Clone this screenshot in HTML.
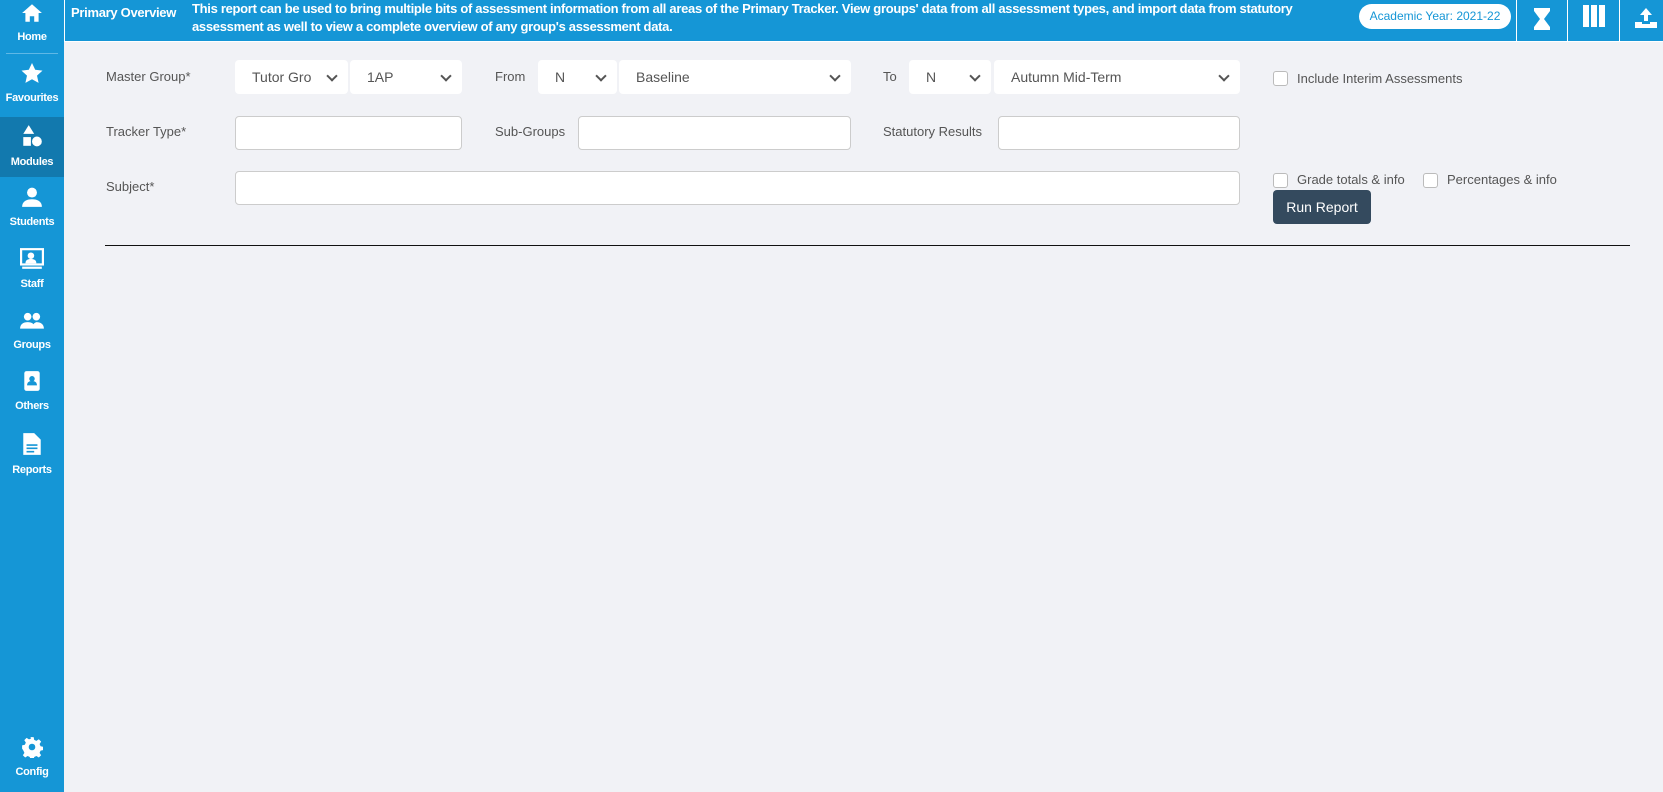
<!DOCTYPE html>
<html><head><style>
*{box-sizing:border-box;margin:0;padding:0}
body{width:1663px;height:792px;background:#f1f2f6;font-family:"Liberation Sans",sans-serif;position:relative;overflow:hidden;color:#555}
.sb{position:absolute;left:0;top:0;width:64px;height:792px;background:#1596d6}
.it{position:absolute;left:0;width:64px;text-align:center;color:#fff;font-size:11px;font-weight:bold;letter-spacing:-0.3px}
.it svg{display:block;margin:0 auto 8px}
.hd{position:absolute;left:64px;top:0;width:1599px;height:42px;background:#1596d6;border-left:1px solid #fff;border-bottom:1px solid #fff}
.ab{position:absolute}
.lbl{position:absolute;font-size:13px;color:#555}
.sel,.inp{position:absolute;background:#fff;border-radius:4px;height:34px}
.inp{border:1px solid #ccc}
.sel{font-size:14px;color:#555;padding:9px 0 0 17px}
.sel:after{content:"";position:absolute;right:12px;top:12px;width:6px;height:6px;border-right:2px solid #555;border-bottom:2px solid #555;transform:rotate(45deg)}
.cb{position:absolute;width:15px;height:15px;border:1px solid #bbb;border-radius:3px;background:#fff}
.sep{position:absolute;top:0;width:1px;height:42px;background:#fff}
</style></head><body>
<div class="sb">
 <div class="it" style="top:3px"><svg width="22" height="20" viewBox="0 0 20 18"><path d="M10 1L1 9h3v8h4v-5h4v5h4V9h3z" fill="#fff"/></svg>Home</div>
 <div style="position:absolute;left:6px;top:53px;width:52px;height:1px;background:#5fb8e6"></div>
 <div class="it" style="top:62px"><svg width="24" height="22" viewBox="0 0 24 22"><path d="M12 1l3.2 6.8 7.3.8-5.5 5 1.6 7.3L12 17.2 5.4 20.9 7 13.6l-5.5-5 7.3-.8z" fill="#fff"/></svg>Favourites</div>
 <div style="position:absolute;top:117px;left:0;width:64px;height:60px;background:#1279ae"></div>
 <div class="it" style="top:124px"><svg width="22" height="24" viewBox="0 0 20 22"><path d="M7 1l5 8H2z" fill="#fff"/><rect x="2" y="12" width="7" height="8" fill="#fff"/><circle cx="14.5" cy="16" r="4.5" fill="#fff"/></svg>Modules</div>
 <div class="it" style="top:186px"><svg width="22" height="22" viewBox="0 0 20 20"><circle cx="10" cy="6" r="4.5" fill="#fff"/><path d="M1 19c0-5 4-7 9-7s9 2 9 7z" fill="#fff"/></svg>Students</div>
 <div class="it" style="top:248px"><svg width="24" height="22" viewBox="0 0 22 20"><rect x="1" y="1" width="20" height="14" fill="none" stroke="#fff" stroke-width="2"/><circle cx="10" cy="7" r="3" fill="#fff"/><path d="M5 14c0-3 2-4 5-4s5 1 5 4z" fill="#fff"/><rect x="2" y="17" width="18" height="2" fill="#fff"/></svg>Staff</div>
 <div class="it" style="top:311px"><svg width="26" height="20" viewBox="0 0 24 18"><circle cx="8" cy="5" r="3.5" fill="#fff"/><circle cx="16" cy="5" r="3.5" fill="#fff"/><path d="M1 16c0-4 3-6 7-6s7 2 7 6zM13 16c0-3 0-5 3-6 4 0 7 2 7 6z" fill="#fff"/></svg>Groups</div>
 <div class="it" style="top:370px"><svg width="20" height="22" viewBox="0 0 18 20"><rect x="2" y="1" width="14" height="18" rx="2" fill="#fff"/><circle cx="9" cy="8" r="2.5" fill="#1596d6"/><path d="M4.5 14c0-3 2-4 4.5-4s4.5 1 4.5 4z" fill="#1596d6"/></svg>Others</div>
 <div class="it" style="top:432px"><svg width="20" height="24" viewBox="0 0 18 22"><path d="M1 1h10l6 6v14H1z" fill="#fff"/><path d="M4 12h10M4 15h10M4 18h7" stroke="#1596d6" stroke-width="1.5"/></svg>Reports</div>
 <div class="it" style="top:736px"><svg width="22" height="22" viewBox="0 0 20 20"><path d="M8.5 1h3l.5 2.5 2 .9 2.2-1.4 2.1 2.1-1.4 2.2.9 2 2.5.5v3l-2.5.5-.9 2 1.4 2.2-2.1 2.1-2.2-1.4-2 .9-.5 2.5h-3l-.5-2.5-2-.9-2.2 1.4-2.1-2.1 1.4-2.2-.9-2L1 11.5v-3l2.5-.5.9-2L3 3.8 5.1 1.7l2.2 1.4 2-.9z" fill="#fff"/><circle cx="10" cy="10" r="3" fill="#1596d6"/></svg>Config</div>
</div>
<div class="hd">
 <div class="ab" style="left:6px;top:5px;color:#fff;font-weight:bold;font-size:13px;letter-spacing:-0.3px">Primary Overview</div>
 <div class="ab" style="left:127px;top:0px;width:1170px;color:#fff;font-weight:bold;font-size:13px;line-height:18px;letter-spacing:-0.3px">This report can be used to bring multiple bits of assessment information from all areas of the Primary Tracker. View groups' data from all assessment types, and import data from statutory assessment as well to view a complete overview of any group's assessment data.</div>
 <div class="ab" style="left:1294px;top:4px;width:152px;height:25px;background:#fff;border-radius:13px;color:#1596d6;font-size:12px;text-align:center;line-height:25px">Academic Year: 2021-22</div>
 <div class="sep" style="left:1451px"></div><div class="sep" style="left:1502px"></div><div class="sep" style="left:1554px"></div>
 <svg class="ab" style="left:1467px;top:7px" width="20" height="24" viewBox="0 0 20 24"><path d="M2 1h16v3l-6 8 6 8v3H2v-3l6-8-6-8z" fill="#fff"/></svg>
 <svg class="ab" style="left:1518px;top:5px" width="22" height="22" viewBox="0 0 22 22"><rect x="0" y="0" width="6" height="22" fill="#fff"/><rect x="8" y="0" width="6" height="22" fill="#fff"/><rect x="16" y="0" width="6" height="22" fill="#fff"/></svg>
 <svg class="ab" style="left:1570px;top:8px" width="22" height="20" viewBox="0 0 22 20"><path d="M11 0l6 7h-4v6H9V7H5z" fill="#fff"/><path d="M0 14h7v2h8v-2h7v6H0z" fill="#fff"/></svg>
</div>
<div class="lbl" style="left:106px;top:69px">Master Group*</div>
<div class="sel" style="left:235px;top:60px;width:113px">Tutor Gro</div>
<div class="sel" style="left:350px;top:60px;width:112px">1AP</div>
<div class="lbl" style="left:495px;top:69px">From</div>
<div class="sel" style="left:538px;top:60px;width:79px">N</div>
<div class="sel" style="left:619px;top:60px;width:232px">Baseline</div>
<div class="lbl" style="left:883px;top:69px">To</div>
<div class="sel" style="left:909px;top:60px;width:82px">N</div>
<div class="sel" style="left:994px;top:60px;width:246px">Autumn Mid-Term</div>
<div class="cb" style="left:1273px;top:71px"></div>
<div class="lbl" style="left:1297px;top:71px">Include Interim Assessments</div>
<div class="lbl" style="left:106px;top:124px">Tracker Type*</div>
<div class="inp" style="left:235px;top:116px;width:227px"></div>
<div class="lbl" style="left:495px;top:124px">Sub-Groups</div>
<div class="inp" style="left:578px;top:116px;width:273px"></div>
<div class="lbl" style="left:883px;top:124px">Statutory Results</div>
<div class="inp" style="left:998px;top:116px;width:242px"></div>
<div class="lbl" style="left:106px;top:179px">Subject*</div>
<div class="inp" style="left:235px;top:171px;width:1005px"></div>
<div class="cb" style="left:1273px;top:173px"></div>
<div class="lbl" style="left:1297px;top:172px">Grade totals &amp; info</div>
<div class="cb" style="left:1423px;top:173px"></div>
<div class="lbl" style="left:1447px;top:172px">Percentages &amp; info</div>
<div class="ab" style="left:1273px;top:190px;width:98px;height:34px;background:#344a5e;border-radius:4px;color:#fff;font-size:14px;text-align:center;line-height:34px">Run Report</div>
<div class="ab" style="left:105px;top:245px;width:1525px;height:1px;background:#111"></div>
</body></html>
